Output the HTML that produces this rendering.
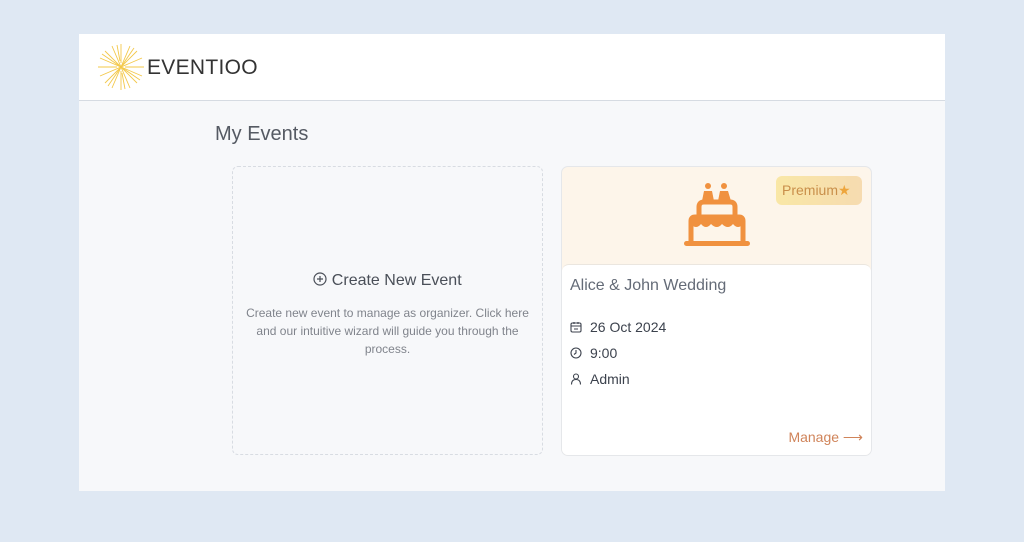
<!DOCTYPE html>
<html><head><style>
body{margin:0;width:1024px;height:542px;background:#dfe8f3;font-family:"Liberation Sans",sans-serif;position:relative;overflow:hidden}
.panel{position:absolute;left:79px;top:34px;width:866px;height:457px;background:#f7f8fa}
.hdr{position:absolute;left:0;top:0;width:866px;height:66px;background:#fff;border-bottom:1px solid #d6dbe2}
.logo{position:absolute;left:68px;top:22px;font-size:21px;color:#333;letter-spacing:0.3px}
h1{position:absolute;left:136px;top:89px;margin:0;font-weight:normal;font-size:20px;color:#555a63}
.c1{position:absolute;left:153px;top:132px;width:309px;height:287px;border:1px dashed #d8dce2;border-radius:6px;text-align:center}
.c1 .t{margin-top:105px;font-size:16px;color:#4a4f58}
.c1 .d{margin:14px 8px 0;font-size:12px;line-height:18px;color:#80848c}
.c2{position:absolute;left:482px;top:132px;width:309px;height:288px;border:1px solid #e5e7ea;border-radius:7px;background:#fdf5ea;overflow:hidden}
.inner{position:absolute;left:0;top:97px;width:309px;height:191px;background:#fff;border-radius:7px 7px 0 0;border-top:1px solid #ebe6df}
.badge{position:absolute;left:214px;top:9px;width:86px;height:29px;border-radius:6px;background:linear-gradient(90deg,#f9e7a6,#f6dbb0);color:#c98f4a;font-size:14px;line-height:29px;padding-left:6px;box-sizing:border-box}
.title{position:absolute;left:8px;top:12px;font-size:16px;color:#646b77}
.row{position:absolute;left:8px;font-size:14px;color:#3c424d}
.row svg{vertical-align:-1px;margin-right:8px}
.man{position:absolute;right:8px;bottom:10px;font-size:14px;color:#d0845a}
</style></head><body>
<div class="panel">
<div class="hdr">
<svg style="position:absolute;left:17px;top:8px" width="50" height="50" viewBox="-25 -25 50 50">
<g stroke="#f3c84a" stroke-width="0.9">
<line x1="0" y1="-23" x2="0" y2="-4"/><line x1="0" y1="4" x2="0" y2="23"/>
<line x1="-23" y1="0" x2="-4" y2="0"/><line x1="4" y1="0" x2="23" y2="0"/>
<line x1="-16" y1="-16" x2="16" y2="16"/><line x1="16" y1="-16" x2="-16" y2="16"/>
<line x1="-9" y1="-21" x2="9" y2="21"/><line x1="9" y1="-21" x2="-9" y2="21"/>
<line x1="-21" y1="-9" x2="21" y2="9"/><line x1="21" y1="-9" x2="-21" y2="9"/>
<line x1="-4" y1="-22" x2="-1" y2="-6"/><line x1="1" y1="6" x2="4" y2="22"/>
<line x1="-19" y1="-13" x2="19" y2="13"/><line x1="13" y1="-19" x2="-13" y2="19"/>
</g></svg>
<div class="logo">EVENTIOO</div>
</div>
<h1>My Events</h1>
<div class="c1"><div class="t"><svg width="14" height="14" viewBox="0 0 14 14" style="vertical-align:-1px"><circle cx="7" cy="7" r="6" fill="none" stroke="#4a4f58" stroke-width="1.2"/><path d="M7 4v6M4 7h6" stroke="#4a4f58" stroke-width="1.2"/></svg> Create New Event</div>
<div class="d">Create new event to manage as organizer. Click here and our intuitive wizard will guide you through the process.</div></div>
<div class="c2">
<svg style="position:absolute;left:122px;top:15px" width="66" height="66" viewBox="0 0 66 66">
<g fill="#f0913f">
<circle cx="24" cy="4" r="3"/><circle cx="40" cy="4" r="3"/>
<path d="M20 9h8l2 10h-12z"/><path d="M36 9h8l3 10h-13z"/>
<rect x="0" y="59" width="66" height="5" rx="2.5"/>
</g>
<g fill="none" stroke="#f0913f" stroke-width="5" stroke-linejoin="round">
<path d="M15 33v-8q0-5 5-5h26q5 0 5 5v8"/>
<path d="M7 60v-21q0-4 4-4h44q4 0 4 4v21"/>
</g>
<path d="M7 37h52v5q-5 6-10 0q-5 6-11 0q-5 6-11 0q-5 6-10 0q-5 6-10 0z" fill="#f0913f"/>
</svg>
<div class="badge">Premium<span style="color:#eda53c">★</span></div>
<div class="inner">
<div class="title">Alice &amp; John Wedding</div>
<div class="row" style="top:54px"><svg width="12" height="12" viewBox="0 0 12 12" fill="none" stroke="#3c424d" stroke-width="1.1"><rect x="1" y="2" width="10" height="9" rx="1.5"/><path d="M1 5h10M4 1v2M8 1v2M4 8h4"/></svg>26 Oct 2024</div>
<div class="row" style="top:80px"><svg width="12" height="12" viewBox="0 0 12 12" fill="none" stroke="#3c424d" stroke-width="1.1"><circle cx="6" cy="6" r="5"/><path d="M6 3v3l-2 1.5"/></svg>9:00</div>
<div class="row" style="top:106px"><svg width="12" height="12" viewBox="0 0 12 12" fill="none" stroke="#3c424d" stroke-width="1.1"><circle cx="6" cy="3.5" r="2.5"/><path d="M1.5 11.5q0-5 4.5-5t4.5 5"/></svg>Admin</div>
<div class="man">Manage ⟶</div>
</div></div>
</div>
</body></html>
